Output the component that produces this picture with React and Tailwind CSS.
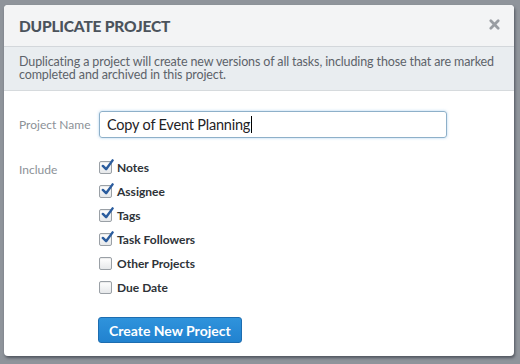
import React from "react";

function Check({ checked }) {
  return (
    <span className="relative inline-block w-[13px] h-[13px] rounded-[2px] border border-[#9aa0a6] bg-gradient-to-b from-white to-[#e6e8ea] shadow-[inset_0_1px_1px_rgba(0,0,0,0.08)]">
      {checked && (
        <svg viewBox="0 0 14 14" className="absolute left-[1px] top-[-3px] w-[13px] h-[13px]">
          <path d="M2 7.5 L5.5 11 L12.5 1.5" fill="none" stroke="#2c5d9e" strokeWidth="2.6" strokeLinecap="round" strokeLinejoin="round" />
        </svg>
      )}
    </span>
  );
}

export default function App() {
  const items = [
    ["Notes", true],
    ["Assignee", true],
    ["Tags", true],
    ["Task Followers", true],
    ["Other Projects", false],
    ["Due Date", false],
  ];
  return (
    <div className="w-[520px] h-[364px] bg-[#8f949b] pt-[5px] pl-[4px] font-['Lato','Liberation_Sans',sans-serif]">
      <div className="w-[510px] h-[351px] bg-white rounded-[4px] overflow-hidden shadow-[1px_2px_3px_rgba(40,45,55,0.6)]">
        <div className="h-[42px] bg-[#f3f4f5] border-b border-[#d3d7db] flex items-center justify-between pl-[15px] pr-[14px]">
          <div className="text-[15.5px] font-black text-[#4b535c] tracking-[-0.2px] pt-[2px]">DUPLICATE PROJECT</div>
          <svg viewBox="0 0 12 12" className="w-[11px] h-[11px] mb-[2px]">
            <path d="M2 2 L10 10 M10 2 L2 10" stroke="#999da2" strokeWidth="3" strokeLinecap="round" />
          </svg>
        </div>
        <div className="h-[44px] bg-[#e9edf0] border-b border-[#d6dadd] px-[15px] pt-[8px] text-[12.5px] leading-[13px] tracking-[-0.12px] text-[#5d636a]">
          Duplicating a project will create new versions of all tasks, including those that are marked completed and archived in this project.
        </div>
        <div className="pl-[15px] pt-[20px]">
          <div className="flex items-center">
            <div className="w-[80px] text-[12px] text-[#8c9197]">Project Name</div>
            <div className="w-[348px] h-[27px] border border-[#8eb0c9] rounded-[3px] shadow-[0_0_3px_rgba(120,180,230,0.6)] flex items-center pl-[7px] text-[14.5px] tracking-[-0.2px] text-[#1f2326]">
              Copy of Event Planning<span className="inline-block w-px h-[17px] bg-black ml-[1px]" />
            </div>
          </div>
          <div className="flex mt-[22px]">
            <div className="w-[80px] text-[12px] text-[#8c9197] pt-[1px]">Include</div>
            <div className="flex flex-col gap-[9px]">
              {items.map(([label, c]) => (
                <div key={label} className="flex items-center h-[15px] gap-[5px]">
                  <Check checked={c} />
                  <span className="text-[12px] font-bold text-[#2e3338]">{label}</span>
                </div>
              ))}
            </div>
          </div>
          <div className="pl-[79px] mt-[22px]">
            <button className="h-[26px] px-[10px] rounded-[3px] bg-gradient-to-b from-[#2f93dc] to-[#2182cf] border border-[#1d6db0] text-white text-[14px] font-bold">
              Create New Project
            </button>
          </div>
        </div>
      </div>
    </div>
  );
}
